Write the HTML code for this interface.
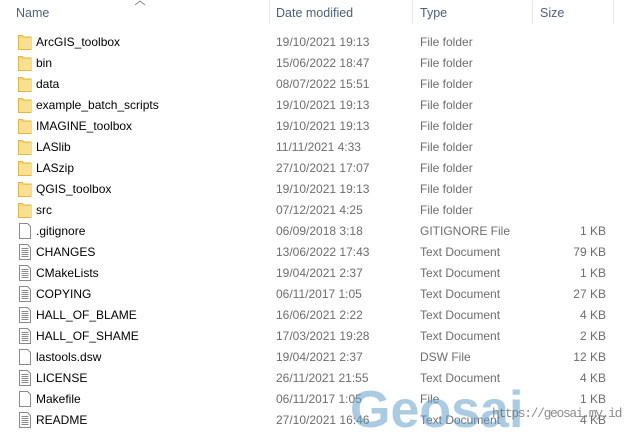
<!DOCTYPE html>
<html><head><style>
body{margin:0;width:630px;height:436px;background:#fff;overflow:hidden;position:relative;font-family:"Liberation Sans",sans-serif;font-size:12px}
.h{position:absolute;top:6px;color:#4c607a;font-size:12.5px}
.d{position:absolute;top:0;width:1px;height:24px;background:#e5e5e5}
.r{position:absolute;left:0;width:630px;height:21px;line-height:21px;white-space:nowrap}
.r span{position:absolute}
.n{left:36px;color:#000}
.t{left:276px;color:#6d6d6d}
.y{left:420px;color:#6d6d6d}
.s{right:24px;color:#6d6d6d}
.ic{position:absolute;left:18px;top:3px}
</style></head><body>
<div class="h" style="left:16px">Name</div>
<svg style="position:absolute;left:134px;top:0" width="12" height="6"><path d="M1 5 L6 1 L11 5" fill="none" stroke="#888" stroke-width="1"/></svg>
<div class="d" style="left:269px"></div><div class="d" style="left:412px"></div><div class="d" style="left:532px"></div><div class="d" style="left:613px"></div>
<div class="h" style="left:276px">Date modified</div>
<div class="h" style="left:420px">Type</div>
<div class="h" style="left:540px">Size</div>
<div id="rows"></div>
<script>
var F='<svg class="ic" width="14" height="15" style="top:3px"><path d="M0.5 0.5h4l1 1.5h7.5v12.5h-12.5z" fill="#f8d775" stroke="#e0b64a"/><rect x="1" y="3" width="12" height="11" fill="#fbe08f"/></svg>';
var G='<svg class="ic" width="14" height="16" style="top:2px"><path d="M1.5 0.5h8l3 3v12h-11z" fill="#fff" stroke="#8a8a8a"/></svg>';
var T='<svg class="ic" width="14" height="16" style="top:2px"><path d="M1.5 0.5h8l3 3v12h-11z" fill="#fff" stroke="#8a8a8a"/><path d="M3.5 4.5h7M3.5 6.5h7M3.5 8.5h7M3.5 10.5h7M3.5 12.5h7" stroke="#8a8a8a"/></svg>';
var d=[["ArcGIS_toolbox","19/10/2021 19:13","File folder","",F],["bin","15/06/2022 18:47","File folder","",F],["data","08/07/2022 15:51","File folder","",F],["example_batch_scripts","19/10/2021 19:13","File folder","",F],["IMAGINE_toolbox","19/10/2021 19:13","File folder","",F],["LASlib","11/11/2021 4:33","File folder","",F],["LASzip","27/10/2021 17:07","File folder","",F],["QGIS_toolbox","19/10/2021 19:13","File folder","",F],["src","07/12/2021 4:25","File folder","",F],[".gitignore","06/09/2018 3:18","GITIGNORE File","1 KB",G],["CHANGES","13/06/2022 17:43","Text Document","79 KB",T],["CMakeLists","19/04/2021 2:37","Text Document","1 KB",T],["COPYING","06/11/2017 1:05","Text Document","27 KB",T],["HALL_OF_BLAME","16/06/2021 2:22","Text Document","4 KB",T],["HALL_OF_SHAME","17/03/2021 19:28","Text Document","2 KB",T],["lastools.dsw","19/04/2021 2:37","DSW File","12 KB",G],["LICENSE","26/11/2021 21:55","Text Document","4 KB",T],["Makefile","06/11/2017 1:05","File","1 KB",G],["README","27/10/2021 16:46","Text Document","4 KB",T]];
var h='';d.forEach(function(r,i){h+='<div class="r" style="top:'+(32+21*i)+'px">'+r[4]+'<span class="n">'+r[0]+'</span><span class="t">'+r[1]+'</span><span class="y">'+r[2]+'</span><span class="s">'+r[3]+'</span></div>'});
document.getElementById('rows').innerHTML=h;
</script>
<div style="position:absolute;left:350px;top:384px;font-size:52px;font-weight:bold;color:rgba(100,160,200,0.55);line-height:52px;font-family:'Liberation Sans',sans-serif">Geosai</div>
<div style="position:absolute;left:492px;top:406px;font-size:13px;color:rgba(110,110,110,0.8);font-family:'Liberation Mono',monospace;letter-spacing:-1.35px;white-space:nowrap">https://geosai.my.id</div>
</body></html>
